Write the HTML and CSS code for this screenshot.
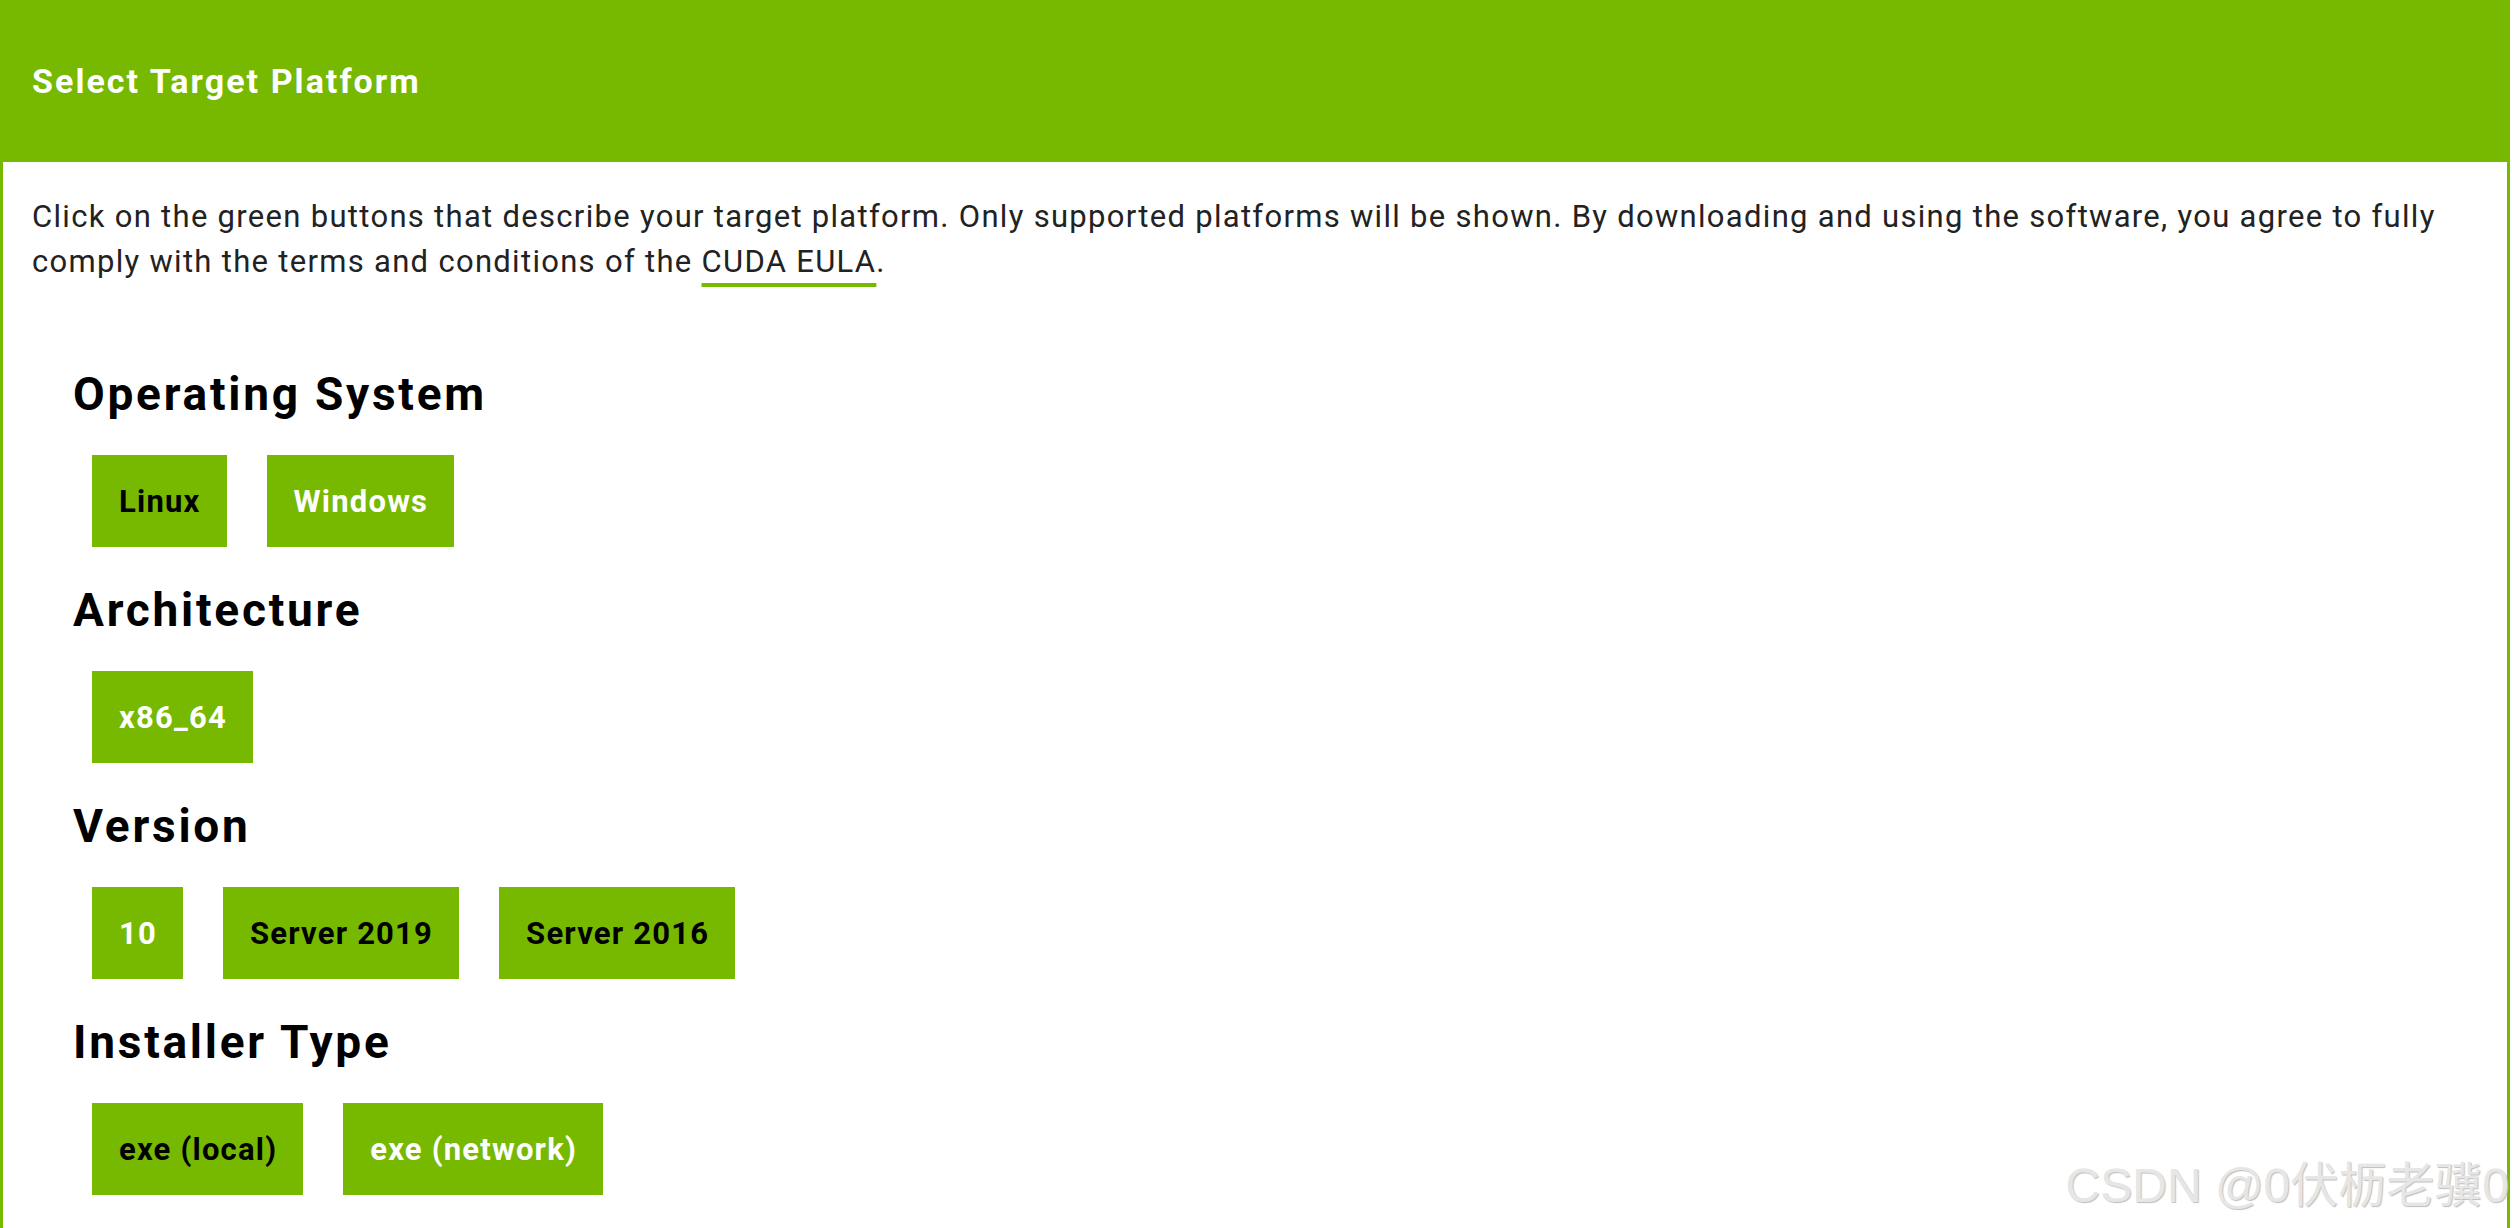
FILE: index.html
```html
<!DOCTYPE html>
<html lang="en">
  <head>
    <meta charset="UTF-8" />
    <meta name="viewport" content="width=device-width, initial-scale=1.0" />
    <title>Select Target Platform</title>
    <link rel="stylesheet" href="styles.css">
  </head>
  <body>
    <div class="panel">
      <div class="panel-head">
        <h1>Select Target Platform</h1>
      </div>
      <p class="intro">
        Click on the green buttons that describe your target platform. Only supported platforms will be shown. By downloading and using the software, you agree to fully comply with the terms and conditions of the <a href="#" class="eula">CUDA EULA</a>.
      </p>
      <div class="selector">
        <div class="group">
          <h2>Operating System</h2>
          <div class="options">
            <button class="opt">Linux</button>
            <button class="opt active">Windows</button>
          </div>
        </div>
        <div class="group">
          <h2>Architecture</h2>
          <div class="options">
            <button class="opt active">x86_64</button>
          </div>
        </div>
        <div class="group">
          <h2>Version</h2>
          <div class="options">
            <button class="opt active">10</button>
            <button class="opt">Server 2019</button>
            <button class="opt">Server 2016</button>
          </div>
        </div>
        <div class="group">
          <h2>Installer Type</h2>
          <div class="options">
            <button class="opt">exe (local)</button>
            <button class="opt active">exe (network)</button>
          </div>
        </div>
      </div>
    </div>
    <div class="watermark">CSDN @0伏枥老骥0</div>
  </body>
</html>
```

FILE: styles.css
```css
body {
  margin: 0;
  font-family: Roboto, "Liberation Sans", sans-serif;
  background-color: #fff;
  color: #222;
}
.panel {
  width: 2510px;
  min-height: 1228px;
  box-sizing: border-box;
  border: 3px solid #76b900;
  border-top: none;
}
.panel-head {
  height: 162px;
  display: flex;
  align-items: center;
  margin: 0 -3px;
  padding-left: 32px;
  background-color: #76b900;
}
.panel-head h1 {
  margin: 0;
  color: #fff;
  font-size: 34px;
  font-weight: 700;
  letter-spacing: 0.06em;
}
.intro {
  margin: 0;
  padding: 32px 40px 0 29px;
  font-size: 31px;
  line-height: 45px;
  letter-spacing: 1.3px;
  color: #222;
}
.eula {
  color: #222;
  text-decoration: underline;
  text-decoration-color: #76b900;
  text-decoration-thickness: 4px;
  text-underline-offset: 11px;
}
.selector {
  padding: 82px 0 0 70px;
}
.group h2 {
  margin: 0;
  font-size: 46px;
  line-height: 56px;
  font-weight: 700;
  letter-spacing: 0.06em;
  color: #000;
}
.options {
  display: flex;
  gap: 40px;
  margin: 33px 0 35px 19px;
}
.opt {
  height: 92px;
  padding: 0 26px 0 27px;
  border: none;
  border-radius: 0;
  background-color: #76b900;
  color: #000;
  font-family: Roboto, "Liberation Sans", sans-serif;
  font-size: 31px;
  font-weight: 700;
  letter-spacing: 1.2px;
  cursor: pointer;
}
.opt.active {
  color: #fff;
}
.watermark {
  position: absolute;
  right: 3px;
  bottom: 12px;
  font-family: "Liberation Sans", "Noto Sans CJK SC", sans-serif;
  font-size: 48px;
  color: #e6e6e6;
  text-shadow: 1px 1px 1px #bdbdbd;
}
```
